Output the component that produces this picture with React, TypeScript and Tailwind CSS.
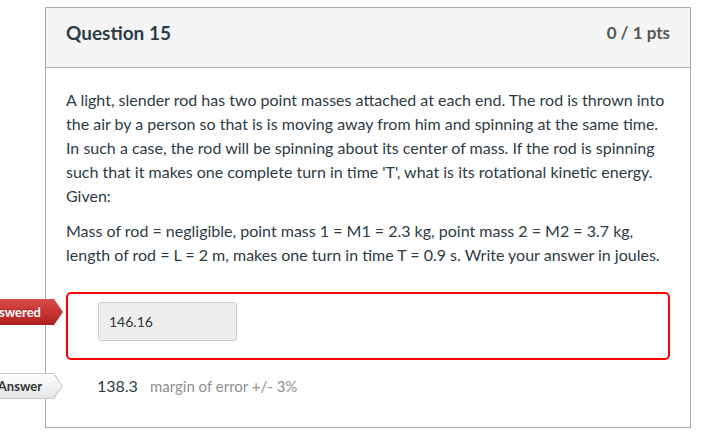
export default function App() {
  return (
    <div className="min-h-screen bg-white pl-[45px] pt-[7px] font-['Lato','Open_Sans',sans-serif] text-[#2d3b45]">
      <div className="w-[646px] border border-[#aaaaaa]">
        {/* header */}
        <div className="flex h-[60px] items-start justify-between border-b border-[#aaaaaa] bg-[#f5f5f5] px-5 pt-[13px]">
          <h2 className="text-[19px] font-bold leading-6 text-[#2d3b45]">Question 15</h2>
          <div className="text-[17px] font-bold leading-6 text-[#555]">0 / 1 pts</div>
        </div>

        {/* body */}
        <div className="pt-5 pb-[28px]">
          <div className="px-5 text-[16px] leading-6">
            <p>
              A light, slender rod has two point masses attached at each end. The rod is thrown into the air by a person so that is is moving away from him and spinning at the same time. In such a case, the rod will be spinning about its center of mass. If the rod is spinning such that it makes one complete turn in time 'T', what is its rotational kinetic energy. Given:
            </p>
            <p className="mt-[11px]">
              Mass of rod = negligible, point mass 1 = M1 = 2.3 kg, point mass 2 = M2 = 3.7 kg, length of rod = L = 2 m, makes one turn in time T = 0.9 s. Write your answer in joules.
            </p>
          </div>

          {/* user answer */}
          <div className="relative mt-[25px] px-5">
            <div className="absolute right-[627px] top-[7px] h-[26px] whitespace-nowrap bg-gradient-to-b from-[#dc4a4a] to-[#b01c1c] pl-3 pr-[22px] text-[13px] font-bold leading-[26px] text-white [clip-path:polygon(0_0,calc(100%-9px)_0,100%_50%,calc(100%-9px)_100%,0_100%)] [text-shadow:0_-1px_0_rgba(0,0,0,0.25)]">
              Incorrectly answered
            </div>
            <div className="h-[68px] rounded-[5px] border-2 border-[#ff0000] pl-[30px] pt-2">
              <div className="flex h-[39px] w-[139px] items-center rounded-[3px] border border-[#cccccc] bg-[#eeeeee] px-[10px] text-[14px] text-[#333]">
                146.16
              </div>
            </div>
          </div>

          {/* correct answer */}
          <div className="relative mt-[13px] flex h-[26px] items-center pl-[51px]">
            <div className="absolute right-[627px] top-0 h-[26px] bg-[#c9c9c9] [clip-path:polygon(0_0,calc(100%-9px)_0,100%_50%,calc(100%-9px)_100%,0_100%)]">
              <div className="m-px h-[24px] whitespace-nowrap bg-gradient-to-b from-white to-[#e4e4e4] pl-3 pr-[20px] text-[13px] font-bold leading-[24px] text-[#333] [clip-path:polygon(0_0,calc(100%-9px)_0,100%_50%,calc(100%-9px)_100%,0_100%)]">
                Correct Answer
              </div>
            </div>
            <span className="text-[16px] text-[#2d3b45]">138.3</span>
            <span className="ml-[12px] text-[15px] text-[#8f8f8f]">margin of error +/- 3%</span>
          </div>
        </div>
      </div>
    </div>
  );
}
